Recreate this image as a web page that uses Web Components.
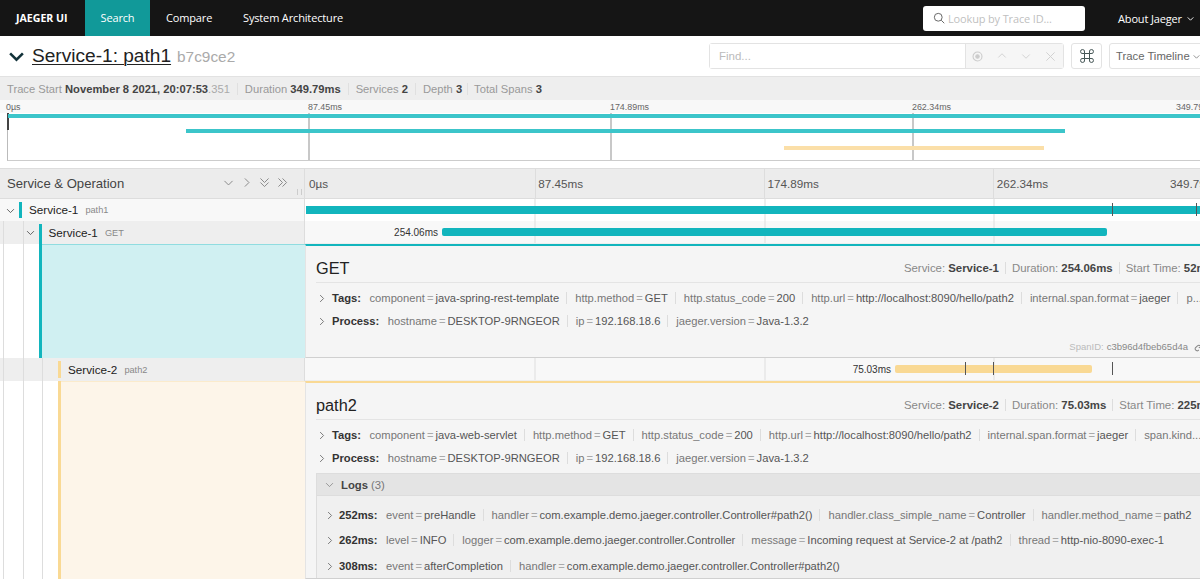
<!DOCTYPE html>
<html>
<head>
<meta charset="utf-8">
<style>
    html, body { margin: 0; height: 100%; overflow: hidden; background: #fff; }
    body { font-family: "Liberation Sans", Arial, sans-serif; color: #333; }
    #page { width: 1226px; }
</style>
</head>
<body>
<div id="page">
    <jaeger-nav></jaeger-nav>
    <trace-title></trace-title>
    <trace-meta></trace-meta>
    <trace-minimap></trace-minimap>
    <timeline-header></timeline-header>

    <span-row depth="0" service="Service-1" op="path1" color="#12b5bd" toggle>
        <span-bar start="1" width="916" color="#12b5bd" marks="807,891" square></span-bar>
    </span-row>
    <span-row depth="1" service="Service-1" op="GET" color="#12b5bd" toggle open>
        <span-bar start="137" width="665" color="#12b5bd" label="254.06ms"></span-bar>
    </span-row>
    <span-detail depth="1" color="#12b5bd" tint="#d0f0f2" height="114"
        title="GET" service="Service-1" duration="254.06ms" start="52ms">
        <kv-row label="Tags:" items="component=java-spring-rest-template|http.method=GET|http.status_code=200|http.url=http://localhost:8090/hello/path2|internal.span.format=jaeger|p..."></kv-row>
        <kv-row label="Process:" items="hostname=DESKTOP-9RNGEOR|ip=192.168.18.6|jaeger.version=Java-1.3.2"></kv-row>
        <span-id slot="footer"></span-id>
    </span-detail>
    <span-row depth="2" service="Service-2" op="path2" color="#f9d994" open>
        <span-bar start="590" width="197" color="#f9d994" label="75.03ms" marks="660,688,807"></span-bar>
    </span-row>
    <span-detail depth="2" color="#f9d994" tint="#fdf5e9" height="198"
        title="path2" service="Service-2" duration="75.03ms" start="225ms">
        <kv-row label="Tags:" items="component=java-web-servlet|http.method=GET|http.status_code=200|http.url=http://localhost:8090/hello/path2|internal.span.format=jaeger|span.kind..."></kv-row>
        <kv-row label="Process:" items="hostname=DESKTOP-9RNGEOR|ip=192.168.18.6|jaeger.version=Java-1.3.2"></kv-row>
        <log-panel>
            <kv-row log label="252ms:" items="event=preHandle|handler=com.example.demo.jaeger.controller.Controller#path2()|handler.class_simple_name=Controller|handler.method_name=path2"></kv-row>
            <kv-row log label="262ms:" items="level=INFO|logger=com.example.demo.jaeger.controller.Controller|message=Incoming request at Service-2 at /path2|thread=http-nio-8090-exec-1"></kv-row>
            <kv-row log label="308ms:" items="event=afterCompletion|handler=com.example.demo.jaeger.controller.Controller#path2()"></kv-row>
        </log-panel>
    </span-detail>
</div>

<script>
const chevron = (dir, size, stroke, width) => {
    const paths = {
        down: 'M3 6l5 5 5-5',
        up: 'M3 10l5-5 5 5',
        right: 'M6 3l5 5-5 5',
        ddown: 'M3 3l5 5 5-5M3 8l5 5 5-5',
        dright: 'M3 3l5 5-5 5M8 3l5 5-5 5'
    };
    return `<svg width="${size}" height="${size}" viewBox="0 0 16 16" fill="none" stroke="${stroke}" stroke-width="${width || 1.2}"><path d="${paths[dir]}"/></svg>`;
};

class JaegerNav extends HTMLElement {
    connectedCallback() {
        this.attachShadow({ mode: 'open' });
        this.shadowRoot.innerHTML = `
            <style>
                :host {
                    display: flex;
                    align-items: center;
                    height: 36px;
                    background: #151515;
                    color: #fff;
                    font: 11px "Open Sans", sans-serif;
                    letter-spacing: -0.15px;
                    white-space: nowrap;
                    padding-right: 26px;
                }
                .brand { font-weight: 700; font-size: 10.6px; letter-spacing: 0; width: 69px; padding-left: 16px; }
                .tab { height: 36px; line-height: 36px; padding: 0 16px; }
                .tab.active { background: #119999; width: 35px; padding: 0 15px; text-align: center; }
                .tab.compare { padding: 0 0 0 16px; width: 61px; }
                .spacer { flex: 1; }
                .lookup {
                    display: flex;
                    align-items: center;
                    gap: 3px;
                    width: 152px;
                    height: 25px;
                    padding-left: 10px;
                    margin-right: 33px;
                    background: #fff;
                    border-radius: 3px;
                    color: #bfbfbf;
                }
                .about { display: flex; align-items: center; gap: 4px; width: 82px; }
            </style>
            <div class="brand">JAEGER UI</div>
            <div class="tab active">Search</div>
            <div class="tab compare">Compare</div>
            <div class="tab">System Architecture</div>
            <div class="spacer"></div>
            <div class="lookup">
                <svg width="12" height="12" viewBox="0 0 16 16" fill="none" stroke="#666" stroke-width="1.3"><circle cx="7" cy="7" r="5.2"/><path d="M11 11l4 4"/></svg>
                <span>Lookup by Trace ID...</span>
            </div>
            <div class="about">About Jaeger ${chevron('down', 9, '#fff', 1.6)}</div>
        `;
    }
}

class TraceTitle extends HTMLElement {
    connectedCallback() {
        this.attachShadow({ mode: 'open' });
        this.shadowRoot.innerHTML = `
            <style>
                :host {
                    display: flex;
                    align-items: center;
                    height: 40px;
                    background: #fff;
                    box-sizing: border-box;
                    white-space: nowrap;
                }
                .caret { margin: 0 7px 0 8px; display: flex; }
                h1 { margin: 0; font: 19.1px "Liberation Sans", sans-serif; color: #222; text-decoration: underline; text-underline-offset: 2px; text-decoration-thickness: 1px; }
                .hash { margin-left: 6px; font-size: 15.4px; color: #aaa; padding-top: 2px; flex: 1; }
                .find {
                    display: flex;
                    width: 355px;
                    height: 26px;
                    border: 1px solid #e3e3e3;
                    border-radius: 3px;
                    box-sizing: border-box;
                    margin-right: 7px;
                }
                .find input {
                    flex: 1;
                    min-width: 0;
                    border: 0;
                    border-right: 1px solid #e3e3e3;
                    padding: 0 9px;
                    font: 11.5px "Liberation Sans", sans-serif;
                    outline: none;
                    background: #fff;
                }
                .find input::placeholder { color: #bbb; }
                .tools {
                    width: 97px;
                    display: flex;
                    align-items: center;
                    justify-content: space-between;
                    padding: 0 7px 0 6px;
                    box-sizing: border-box;
                    background: #f6f6f6;
                }
                .cmd {
                    width: 31px;
                    height: 26px;
                    border: 1px solid #e3e3e3;
                    border-radius: 3px;
                    box-sizing: border-box;
                    margin-right: 7px;
                    display: flex;
                    align-items: center;
                    justify-content: center;
                }
                .view {
                    width: 117px;
                    height: 26px;
                    border: 1px solid #e3e3e3;
                    border-radius: 3px;
                    box-sizing: border-box;
                    display: flex;
                    align-items: center;
                    gap: 2px;
                    padding-left: 6px;
                    font-size: 11.3px;
                    color: #666;
                }
            </style>
            <div class="caret"><svg width="17" height="17" viewBox="0 0 16 16" fill="none" stroke="#12323a" stroke-width="2.4"><path d="M2 5l6 6 6-6"/></svg></div>
            <h1>Service-1: path1</h1>
            <span class="hash">b7c9ce2</span>
            <div class="find">
                <input placeholder="Find...">
                <div class="tools">
                    <svg width="11" height="11" viewBox="0 0 16 16" fill="none" stroke="#ccc" stroke-width="1.6"><circle cx="8" cy="8" r="6.5"/><circle cx="8" cy="8" r="2.5" fill="#ccc"/></svg>
                    ${chevron('up', 12, '#d0d0d0')}
                    ${chevron('down', 12, '#d0d0d0')}
                    <svg width="11" height="11" viewBox="0 0 16 16" stroke="#d0d0d0" stroke-width="1.4"><path d="M2 2l12 12M14 2L2 14"/></svg>
                </div>
            </div>
            <div class="cmd">
                <svg width="16" height="16" viewBox="0 0 16 16" fill="none" stroke="#455" stroke-width="1"><path d="M5.5 5.5h5v5h-5zM5.5 5.5H4a2 2 0 1 1 1.5-1.5zM10.5 5.5V4a2 2 0 1 1 1.5 1.5zM10.5 10.5H12a2 2 0 1 1-1.5 1.5zM5.5 10.5V12a2 2 0 1 1-1.5-1.5z"/></svg>
            </div>
            <div class="view">Trace Timeline ${chevron('down', 9, '#777', 1.4)}</div>
        `;
    }
}

class TraceMeta extends HTMLElement {
    connectedCallback() {
        this.attachShadow({ mode: 'open' });
        this.shadowRoot.innerHTML = `
            <style>
                :host {
                    display: flex;
                    align-items: center;
                    height: 24px;
                    padding-left: 7px;
                    background: #eee;
                    border-top: 1px solid #e2e2e2;
                    box-sizing: border-box;
                    font-size: 11.2px;
                    color: #999;
                    white-space: nowrap;
                }
                b { color: #444; }
                .fade { color: #aaa; }
                .item + .item { margin-left: 7px; padding-left: 7px; border-left: 1px solid #e0e0e0; }
                .item + .item:last-child { margin-left: 5px; padding-left: 6px; }
            </style>
            <span class="item">Trace Start <b>November 8 2021, 20:07:53</b><span class="fade">.351</span></span>
            <span class="item">Duration <b>349.79ms</b></span>
            <span class="item">Services <b>2</b></span>
            <span class="item">Depth <b>3</b></span>
            <span class="item">Total Spans <b>3</b></span>
        `;
    }
}

class TraceMinimap extends HTMLElement {
    connectedCallback() {
        this.attachShadow({ mode: 'open' });
        this.shadowRoot.innerHTML = `
            <style>
                :host { display: block; background: #fff; padding-bottom: 7px; }
                .labels {
                    display: grid;
                    grid-template-columns: repeat(5, 302px);
                    height: 13px;
                    padding-left: 6px;
                    line-height: 14px;
                    background: #f8f8f8;
                    font-size: 8.9px;
                    color: #666;
                    white-space: nowrap;
                }
                .labels span:last-child { margin-left: -38px; }
                .canvas {
                    position: relative;
                    margin-left: 7px;
                    height: 48px;
                    width: 1208px;
                    box-sizing: border-box;
                    border-left: 1px solid #bbb;
                    border-bottom: 1px solid #ccc;
                    background: repeating-linear-gradient(90deg, transparent 0 300.5px, #c8c8c8 300.5px 302px);
                }
                .handle { position: absolute; left: -1px; top: 0; width: 2px; height: 17px; background: #444; }
                .bar { height: 4px; position: absolute; }
            </style>
            <div class="labels"><span>0µs</span><span>87.45ms</span><span>174.89ms</span><span>262.34ms</span><span>349.79ms</span></div>
            <div class="canvas">
                <div class="handle"></div>
                <div class="bar" style="left:0;width:1208px;top:1px;background:#3cc5ca"></div>
                <div class="bar" style="left:178px;width:879px;top:16px;background:#3cc5ca"></div>
                <div class="bar" style="left:776px;width:260px;top:33px;background:#fbdfa8"></div>
            </div>
        `;
    }
}

class TimelineHeader extends HTMLElement {
    connectedCallback() {
        this.attachShadow({ mode: 'open' });
        this.shadowRoot.innerHTML = `
            <style>
                :host {
                    display: flex;
                    height: 31px;
                    box-sizing: border-box;
                    background: #ececec;
                    border-top: 1px solid #ddd;
                    border-bottom: 1px solid #ddd;
                    white-space: nowrap;
                    color: #444;
                }
                .name {
                    width: 305px;
                    box-sizing: border-box;
                    flex: none;
                    display: flex;
                    align-items: center;
                    padding-left: 7px;
                    font-size: 13.1px;
                    border-right: 1px solid #ddd;
                    position: relative;
                }
                .name span { flex: 1; }
                .icons { display: flex; gap: 5px; margin-right: 15px; margin-top: -2px; }
                .grip { position: absolute; right: 2px; bottom: 3px; width: 3px; height: 6px; border-left: 1px solid #ccc; border-right: 1px solid #ccc; }
                .ticks { display: grid; grid-template-columns: repeat(5, 229.25px); align-items: center; font-size: 11.7px; color: #555; padding-left: 1.5px; }
                .ticks span { padding-left: 2.5px; height: 100%; line-height: 29px; border-right: 1px solid #ddd; box-sizing: border-box; }
                .ticks span:last-child { margin-left: -56px; border-right: 0; }
            </style>
            <div class="name">
                <span>Service &amp; Operation</span>
                <div class="icons">
                    ${chevron('down', 13, '#888')}${chevron('right', 13, '#888')}${chevron('ddown', 13, '#888')}${chevron('dright', 13, '#888')}
                </div>
                <div class="grip"></div>
            </div>
            <div class="ticks"><span>0µs</span><span>87.45ms</span><span>174.89ms</span><span>262.34ms</span><span>349.79ms</span></div>
        `;
    }
}

class SpanRow extends HTMLElement {
    connectedCallback() {
        const depth = +this.getAttribute('depth');
        const color = this.getAttribute('color');
        const guides = '<i class="guide"></i>'.repeat(depth);
        const heights = [22, 23, 23];
        this.attachShadow({ mode: 'open' });
        this.shadowRoot.innerHTML = `
            <style>
                :host { display: flex; height: ${heights[depth]}px; white-space: nowrap; }
                .left {
                    width: 305px;
                    flex: none;
                    box-sizing: border-box;
                    display: flex;
                    align-items: stretch;
                    padding-left: 3px;
                    background: ${depth ? '#eee' : '#f8f8f8'};
                    border-right: 1px solid #ddd;
                    font-size: 11.7px;
                    color: #222;
                }
                .guide { width: 19.5px; flex: none; border-left: 1px solid #ddd; box-sizing: border-box; }
                .toggle {
                    width: 16px;
                    flex: none;
                    box-sizing: border-box;
                    display: flex;
                    align-items: center;
                    justify-content: center;
                    padding-right: 2px;
                    border-left: ${depth ? '1px solid #ddd' : '0'};
                }
                .mark { width: 3px; flex: none; background: ${color}; margin: 3px 0 ${depth === 1 ? 0 : 3}px; }
                .label { display: flex; align-items: center; gap: 7px; margin-left: 7px; padding-bottom: ${depth ? 0 : 2}px; }
                small { font-size: 9.2px; color: #888; padding-top: 1px; }
                .track {
                    flex: 1;
                    min-width: 0;
                    display: flex;
                    align-items: center;
                    background: repeating-linear-gradient(90deg, transparent 0 228.25px, #ddd 228.25px 229.25px) 1.5px 0;
                    background-color: ${depth ? '#f8f8f8' : '#fff'};
                    border-bottom: ${depth ? '1px solid #eee' : '0'};
                    box-sizing: border-box;
                }
            </style>
            <div class="left">
                ${guides}
                <div class="toggle">${this.hasAttribute('toggle') ? chevron('down', 11, '#555', 1.3) : ''}</div>
                <div class="mark"></div>
                <div class="label"><span>${this.getAttribute('service')}</span><small>${this.getAttribute('op')}</small></div>
            </div>
            <div class="track"><slot></slot></div>
        `;
    }
}

class SpanBar extends HTMLElement {
    connectedCallback() {
        const marks = (this.getAttribute('marks') || '').split(',').filter(Boolean);
        const color = this.getAttribute('color');
        const label = this.getAttribute('label');
        this.attachShadow({ mode: 'open' });
        this.shadowRoot.innerHTML = `
            <style>
                :host { display: flex; align-items: center; width: 917px; position: relative; height: 100%; }
                .lead {
                    width: ${this.getAttribute('start')}px;
                    flex: none;
                    text-align: right;
                    padding-right: ${label ? 4 : 0}px;
                    box-sizing: border-box;
                    font-size: 10px;
                    color: #333;
                }
                .bar {
                    width: ${this.getAttribute('width')}px;
                    height: 8px;
                    background: ${color};
                    border-radius: ${this.hasAttribute('square') ? 0 : '2px'};
                }
                .tick { position: absolute; top: 4px; bottom: 5px; width: 1px; background: #555; }
            </style>
            <div class="lead">${label || ''}</div>
            <div class="bar"></div>
            ${marks.map(m => `<div class="tick" style="left:${m}px"></div>`).join('')}
        `;
    }
}

class SpanDetail extends HTMLElement {
    connectedCallback() {
        const depth = +this.getAttribute('depth');
        const color = this.getAttribute('color');
        const guides = '<i class="guide"></i>'.repeat(depth);
        this.attachShadow({ mode: 'open' });
        this.shadowRoot.innerHTML = `
            <style>
                :host { display: flex; height: ${this.getAttribute('height')}px; white-space: nowrap; }
                .left {
                    width: 305px;
                    flex: none;
                    box-sizing: border-box;
                    display: flex;
                    padding-left: 3px;
                    background: #fff;
                }
                .guide { width: 19.5px; flex: none; border-left: 1px solid #ddd; box-sizing: border-box; }
                .gap { width: 16px; flex: none; border-left: 1px solid #ddd; box-sizing: border-box; }
                .mark { width: 3px; flex: none; background: ${color}; }
                .tint { flex: 1; background: ${this.getAttribute('tint')}; border-top: 1px solid ${color}55; }
                .panel {
                    flex: 1;
                    min-width: 0;
                    box-sizing: border-box;
                    background: #f5f5f5;
                    border-top: 2px solid ${color};
                    border-left: 1px solid #e4e4e4;
                    border-bottom: 1px solid #d0d0d0;
                    padding: 0 10px;
                    position: relative;
                    display: flex;
                    flex-direction: column;
                }
                header {
                    display: flex;
                    align-items: center;
                    justify-content: space-between;
                    height: 28px;
                    padding-top: 8px;
                    border-bottom: 1px solid #e4e4e4;
                    margin-bottom: 4px;
                    flex: none;
                }
                h2 { margin: 0; font: 16.3px "Liberation Sans", sans-serif; color: #222; }
                .stats { font-size: 11.4px; color: #888; display: flex; margin-right: 3px; }
                .stats span + span { margin-left: 6px; padding-left: 6px; border-left: 1px solid #ddd; }
                .stats b { color: #444; }
                ::slotted([slot=footer]) { position: absolute; right: 21px; bottom: 5px; }
            </style>
            <div class="left">
                ${guides}
                <div class="gap"></div>
                <div class="mark"></div>
                <div class="tint"></div>
            </div>
            <div class="panel">
                <header>
                    <h2>${this.getAttribute('title')}</h2>
                    <div class="stats">
                        <span>Service: <b>${this.getAttribute('service')}</b></span>
                        <span>Duration: <b>${this.getAttribute('duration')}</b></span>
                        <span>Start Time: <b>${this.getAttribute('start')}</b></span>
                    </div>
                </header>
                <slot></slot>
                <slot name="footer"></slot>
            </div>
        `;
    }
}

class KvRow extends HTMLElement {
    connectedCallback() {
        const items = this.getAttribute('items').split('|').map(entry => {
            const at = entry.indexOf('=');
            if (at < 0) return `<span class="kv">${entry}</span>`;
            return `<span class="kv">${entry.slice(0, at)}<em>=</em><u>${entry.slice(at + 1)}</u></span>`;
        }).join('');
        const log = this.hasAttribute('log');
        this.attachShadow({ mode: 'open' });
        this.shadowRoot.innerHTML = `
            <style>
                :host {
                    display: flex;
                    align-items: center;
                    height: ${log ? 25.5 : 22.5}px;
                    font-size: 11.2px;
                    color: #777;
                    white-space: nowrap;
                    overflow: hidden;
                    flex: none;
                }
                .arrow { display: flex; width: ${log ? 15 : 16}px; flex: none; margin-left: ${log ? 7 : 0}px; margin-top: 1px; }
                b { color: #333; margin-right: 8.5px; }
                .kv + .kv { margin-left: 7px; padding-left: 8px; border-left: 1px solid #ddd; }
                em { font-style: normal; color: #aaa; margin: 0 2px; }
                u { text-decoration: none; color: #555; }
            </style>
            <div class="arrow">${chevron('right', 11, '#777', 1.4)}</div>
            <b>${this.getAttribute('label')}</b>
            ${items}
        `;
    }
}

class LogPanel extends HTMLElement {
    connectedCallback() {
        this.attachShadow({ mode: 'open' });
        this.shadowRoot.innerHTML = `
            <style>
                :host {
                    display: block;
                    margin-top: 4px;
                    background: #f0f0f0;
                    border: 1px solid #ddd;
                    border-bottom: 0;
                    flex: 1;
                    overflow: hidden;
                }
                .head {
                    display: flex;
                    align-items: center;
                    height: 21px;
                    background: #e4e4e4;
                    border-bottom: 1px solid #ddd;
                    font-size: 11.3px;
                    color: #777;
                    padding-left: 7px;
                    margin-bottom: 6px;
                }
                .head svg { margin-right: 6px; }
                b { color: #444; margin-right: 3px; }
            </style>
            <div class="head">${chevron('down', 11, '#888', 1.2)}<b>Logs</b> (3)</div>
            <slot></slot>
        `;
    }
}

class SpanId extends HTMLElement {
    connectedCallback() {
        this.attachShadow({ mode: 'open' });
        this.shadowRoot.innerHTML = `
            <style>
                :host { display: flex; align-items: center; gap: 3px; font-size: 9.5px; color: #bbb; white-space: nowrap; }
                span { color: #888; margin-right: 3px; }
            </style>
            SpanID: <span>c3b96d4fbeb65d4a</span>
            <svg width="11" height="11" viewBox="0 0 16 16" fill="none" stroke="#888" stroke-width="1.5"><path d="M7 9a3 3 0 0 0 4 0l3-3a3 3 0 0 0-4-4L9 3M9 7a3 3 0 0 0-4 0l-3 3a3 3 0 0 0 4 4l1-1"/></svg>
        `;
    }
}

customElements.define('jaeger-nav', JaegerNav);
customElements.define('trace-title', TraceTitle);
customElements.define('trace-meta', TraceMeta);
customElements.define('trace-minimap', TraceMinimap);
customElements.define('timeline-header', TimelineHeader);
customElements.define('span-row', SpanRow);
customElements.define('span-bar', SpanBar);
customElements.define('span-detail', SpanDetail);
customElements.define('kv-row', KvRow);
customElements.define('log-panel', LogPanel);
customElements.define('span-id', SpanId);
</script>
</body>
</html>
